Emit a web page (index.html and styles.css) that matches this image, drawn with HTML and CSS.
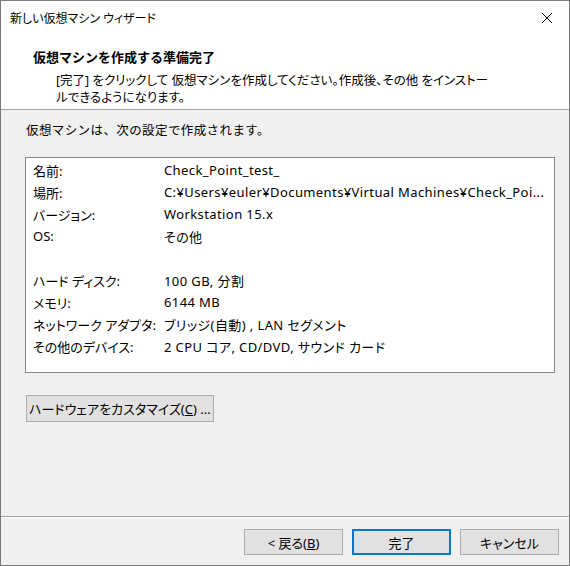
FILE: index.html
```html
<!DOCTYPE html>
<html lang="ja">
<head>
    <meta charset="UTF-8">
    <title>新しい仮想マシン ウィザード</title>
    <link rel="stylesheet" href="styles.css">
</head>
<body>
<div class="window">
    <div class="titlebar">
        <span class="title">新しい仮想マシン ウィザード</span>
        <svg class="close" width="12" height="12" viewBox="0 0 12 12">
            <path d="M1 1 L11 11 M11 1 L1 11" stroke="#000" stroke-width="1" fill="none"/>
        </svg>
    </div>
    <div class="header">
        <div class="heading">仮想マシンを作成する準備完了</div>
        <div class="desc">[完了] をクリックして 仮想マシンを作成してください。作成後、その他 をインストー<br>ルできるようになります。</div>
    </div>
    <div class="content">
        <p class="intro">仮想マシンは、次の設定で作成されます。</p>
        <div class="summary">
            <div class="row"><span class="key">名前:</span><span class="val">Check_Point_test_</span></div>
            <div class="row"><span class="key">場所:</span><span class="val">C:¥Users¥euler¥Documents¥Virtual Machines¥Check_Poi...</span></div>
            <div class="row"><span class="key">バージョン:</span><span class="val">Workstation 15.x</span></div>
            <div class="row"><span class="key">OS:</span><span class="val">その他</span></div>
            <div class="row"></div>
            <div class="row"><span class="key">ハード ディスク:</span><span class="val">100 GB, 分割</span></div>
            <div class="row"><span class="key">メモリ:</span><span class="val">6144 MB</span></div>
            <div class="row"><span class="key">ネットワーク アダプタ:</span><span class="val">ブリッジ(自動) , LAN セグメント</span></div>
            <div class="row"><span class="key">その他のデバイス:</span><span class="val">2 CPU コア, CD/DVD, サウンド カード</span></div>
        </div>
        <button class="btn customize">ハードウェアをカスタマイズ(<u>C</u>) ...</button>
    </div>
    <div class="footer">
        <button class="btn">&lt; 戻る(<u>B</u>)</button>
        <button class="btn primary">完了</button>
        <button class="btn">キャンセル</button>
    </div>
</div>
</body>
</html>
```

FILE: styles.css
```css
html, body {
    margin: 0;
    padding: 0;
}

body {
    font-family: "Noto Sans", "Noto Sans CJK JP", sans-serif;
    font-size: 13px;
    font-feature-settings: "palt";
    color: #000;
    background: #f0f0f0;
}

.window {
    width: 570px;
    height: 566px;
    box-sizing: border-box;
    border: 1px solid #7a7a7a;
    display: flex;
    flex-direction: column;
    background: #f0f0f0;
}

.titlebar {
    height: 34px;
    background: #fff;
    display: flex;
    align-items: center;
    justify-content: space-between;
    padding: 0 16px 0 9px;
}

.title {
    font-size: 12px;
    line-height: 17px;
}

.close {
    display: block;
    margin-top: -1px;
}

.header {
    background: #fff;
    padding: 13px 0 3px 32px;
    border-bottom: 1px solid #a0a0a0;
}

.heading {
    font-weight: bold;
    font-size: 13px;
    line-height: 18px;
    font-feature-settings: normal;
}

.desc {
    margin-top: 6px;
    padding-left: 23px;
    font-size: 12.5px;
    line-height: 17px;
}

.content {
    flex: 1;
    padding: 12px 14px 0 24px;
    border-bottom: 1px solid #a0a0a0;
}

.intro {
    margin: 0 0 17px 1px;
    font-size: 12.5px;
    font-feature-settings: normal;
    letter-spacing: 0.4px;
    line-height: 18px;
}

.summary {
    height: 216px;
    box-sizing: border-box;
    border: 1px solid #828790;
    background: #fff;
    padding: 1px 6px 0 7px;
}

.row {
    display: flex;
    height: 22px;
    align-items: center;
    white-space: nowrap;
}

.key {
    width: 131px;
    flex-shrink: 0;
}

.val {
    letter-spacing: 0.4px;
}

.btn {
    font-family: inherit;
    font-size: 13px;
    font-feature-settings: "palt";
    color: #000;
    background: #e1e1e1;
    border: 1px solid #adadad;
    border-radius: 0;
    height: 26px;
    padding: 0;
    box-sizing: border-box;
    white-space: nowrap;
}

.customize {
    display: block;
    margin: 22px 0 0 1px;
    width: 188px;
    height: 27px;
    text-align: left;
    padding-left: 2px;
}

.footer {
    border-top: 1px solid #fff;
    padding: 11px 10px 0 0;
    height: 36px;
    display: flex;
    justify-content: flex-end;
    align-items: flex-start;
    gap: 9px;
}

.footer .btn {
    width: 99px;
}

.primary {
    border: 2px solid #0078d7;
}
```
